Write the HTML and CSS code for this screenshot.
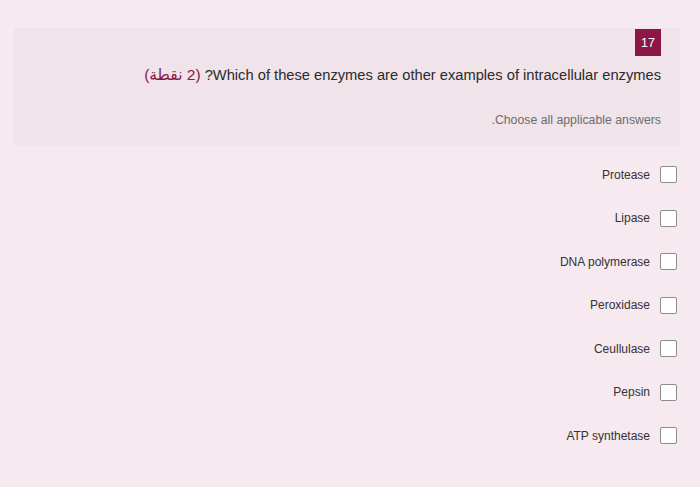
FILE: index.html
```html
<!DOCTYPE html>
<html lang="en">
<head>
<meta charset="utf-8">
<title>Question 17</title>
<link rel="stylesheet" href="styles.css">
</head>
<body>
<div class="page">
  <section class="question">
    <div class="badge-row"><span class="badge">17</span></div>
    <p class="prompt" dir="rtl">Which of these enzymes are other examples of intracellular enzymes? <span class="points">(2 نقطة)</span></p>
    <p class="hint" dir="rtl">Choose all applicable answers.</p>
  </section>
  <ul class="options">
    <li class="option"><span class="label">Protease</span><span class="box"></span></li>
    <li class="option"><span class="label">Lipase</span><span class="box"></span></li>
    <li class="option"><span class="label">DNA polymerase</span><span class="box"></span></li>
    <li class="option"><span class="label">Peroxidase</span><span class="box"></span></li>
    <li class="option"><span class="label">Ceullulase</span><span class="box"></span></li>
    <li class="option"><span class="label">Pepsin</span><span class="box"></span></li>
    <li class="option"><span class="label">ATP synthetase</span><span class="box"></span></li>
  </ul>
</div>
</body>
</html>
```

FILE: styles.css
```css
html, body {
  margin: 0;
  padding: 0;
}
body {
  width: 700px;
  height: 487px;
  overflow: hidden;
  background: #f6e9ef;
  font-family: "Liberation Sans", Arial, "DejaVu Sans", sans-serif;
  color: #2f2f2f;
}
.page {
  padding-top: 28px;
}
.question {
  margin-left: 14px;
  width: 666px;
  box-sizing: border-box;
  background: #f0e3ea;
  padding: 1px 19px 18px 0;
}
.badge-row {
  display: flex;
  justify-content: flex-end;
}
.badge {
  width: 26px;
  height: 27px;
  background: #8b1746;
  color: #fff;
  font-size: 12.5px;
  display: flex;
  align-items: center;
  justify-content: center;
}
.prompt {
  margin: 9px 0 0;
  font-size: 14.7px;
  line-height: 20px;
  text-align: right;
  color: #2b2b2b;
}
.points {
  color: #8b1746;
  font-size: 15.5px;
}
.hint {
  margin: 27px 0 0;
  font-size: 12.3px;
  line-height: 16px;
  text-align: right;
  color: #6d6d6d;
}
.options {
  list-style: none;
  margin: 20px 23px 0 0;
  padding: 0;
  display: flex;
  flex-direction: column;
  align-items: flex-end;
  gap: 26.5px;
}
.option {
  display: flex;
  align-items: center;
  gap: 10px;
  height: 17px;
}
.label {
  font-size: 12px;
  color: #333;
}
.box {
  width: 15px;
  height: 15px;
  border: 1px solid #8c8c8c;
  border-radius: 2px;
  background: #fff;
}
```
